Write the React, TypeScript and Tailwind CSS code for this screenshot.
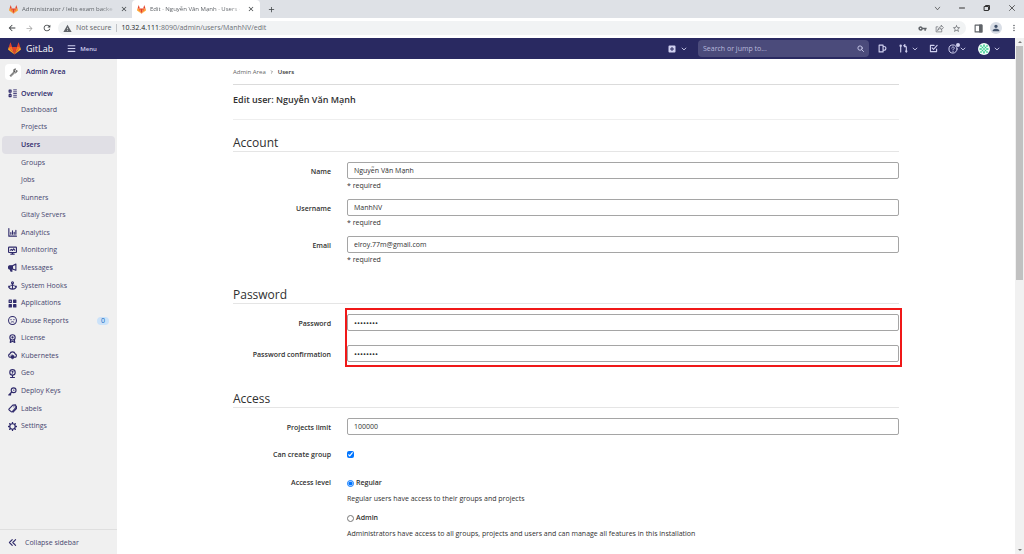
import type { ReactNode } from 'react'
import { MdArrowBack, MdArrowForward, MdRefresh, MdWarning, MdVpnKey, MdStarBorder, MdPerson, MdMoreVert, MdClose, MdAdd } from 'react-icons/md'

function Tanuki({ className }: { className: string }) {
  return (
    <svg viewBox="0 0 36 34" className={className} aria-hidden="true">
      <path fill="#e24329" d="M18 33.5 24.6 13H11.4z" />
      <path fill="#fc6d26" d="M18 33.5 11.4 13H2.2zM18 33.5 24.6 13h9.2z" />
      <path fill="#fca326" d="M2.2 13 .2 19.2a1.400 1.400 0 0 0 .5 1.500L18 33.500zM33.800 13l2 6.200a1.400 1.400 0 0 1-.5 1.500L18 33.500z" />
      <path fill="#e24329" d="M2.200 13h9.200L7.500.8c-.2-.6-1.100-.6-1.300 0zM33.800 13h-9.200L28.500.8c.2-.6 1.100-.6 1.300 0z" />
    </svg>
  )
}

function Icon({ children, className = 'size-[9px]' }: { children: ReactNode; className?: string }) {
  return (
    <svg viewBox="0 0 16 16" fill="none" stroke="currentColor" strokeWidth="2" strokeLinecap="round" strokeLinejoin="round" className={`shrink-0 ${className}`} aria-hidden="true">
      {children}
    </svg>
  )
}

const icons = {
  overview: <><rect x="2" y="2" width="3.500" height="3.500" /><rect x="2" y="10" width="3.500" height="3.500" /><path d="M10 1.500h5M10 5h5M10 8h5M10 11.200h5M10 14.500h5M3.700 8h.1" strokeWidth="1.500" /></>,
  analytics: <path d="M1.500 1v13.500h13.500M5 8v3M8 5v6M11 7.500V11M14 4v7" />,
  monitoring: <><rect x="1" y="2" width="14" height="9.500" rx="1" /><path d="M5 14.500h6M8 12v2M4 7.500 6 6l2 2 2-3 2 2.500" /></>,
  messages: <><path d="M14 2v11L8 10.500V5zM8 5H3a2 2 0 0 0-2 2v1.500a2 2 0 0 0 2 2h5M4 11l1 3.500h2l-.7-4" /><path d="M2 6h5v4H2z" fill="currentColor" /></>,
  hooks: <><circle cx="8" cy="3" r="1.700" /><path d="M8 5v9.500M5 7.500h6M1.500 9.500c0 3.200 2.700 5 6.500 5s6.500-1.800 6.500-5M1 10.500l.8-1.500 1.700 1M15 10.500 14.200 9l-1.700 1" /></>,
  applications: <><rect x="2" y="2" width="4" height="4" /><rect x="10" y="2" width="4" height="4" fill="currentColor" /><rect x="2" y="10" width="4" height="4" fill="currentColor" /><rect x="10" y="10" width="4" height="4" fill="currentColor" /></>,
  abuse: <><circle cx="8" cy="8" r="7" strokeWidth="1.800" /><path d="M5 6.500h.8M10.200 6.500h.8M5.500 11c1.300-1.300 3.700-1.300 5 0" strokeWidth="1.600" /></>,
  license: <><circle cx="8" cy="6" r="4.700" /><circle cx="8" cy="6" r="1" /><path d="M4.800 10 4 15l4-2 4 2-.8-5" /></>,
  kubernetes: <><path d="M4 11.500a3.300 3.300 0 0 1-.6-6.400 4.800 4.800 0 0 1 9.300 0 3.300 3.300 0 0 1-.7 6.400" /><path d="m8 7 3 1.700v3.400L8 14l-3-1.900V8.700z" fill="currentColor" strokeWidth="1" /></>,
  geo: <><circle cx="8" cy="6" r="4.800" /><path d="M8 11v3.500M4.500 15h7M7 4l2 1-1.500 2.500" /></>,
  keys: <><circle cx="10" cy="5.800" r="4.300" /><path d="M6.800 9 1.500 14.200h3V12M10.200 5.700h.2" strokeWidth="2.200" /></>,
  labels: <><path d="m2 8.500 6.500-6.500 5-.5.8 4.500-6.600 7.500a1.500 1.500 0 0 1-2.200 0L2 10.600a1.500 1.500 0 0 1 0-2.100z" /><path d="M9 14.500 15 8V4M10.500 5h.1" /></>,
  settings: <><circle cx="8" cy="8" r="4.800" /><path d="M8 1v1.500M8 13.500V15M1 8h1.500M13.500 8H15M3 3l1 1M12 12l1 1M13 3l-1 1M4 12l-1 1" strokeWidth="2.400" /></>,
}

const overviewLinks = ['Dashboard', 'Projects', 'Users', 'Groups', 'Jobs', 'Runners', 'Gitaly Servers']

const sections: { label: string; icon: ReactNode; count?: number }[] = [
  { label: 'Analytics', icon: icons.analytics },
  { label: 'Monitoring', icon: icons.monitoring },
  { label: 'Messages', icon: icons.messages },
  { label: 'System Hooks', icon: icons.hooks },
  { label: 'Applications', icon: icons.applications },
  { label: 'Abuse Reports', icon: icons.abuse, count: 0 },
  { label: 'License', icon: icons.license },
  { label: 'Kubernetes', icon: icons.kubernetes },
  { label: 'Geo', icon: icons.geo },
  { label: 'Deploy Keys', icon: icons.keys },
  { label: 'Labels', icon: icons.labels },
  { label: 'Settings', icon: icons.settings },
]

function Chevron() {
  return <Icon className="size-[6px]"><path d="m3 5.500 5 5 5-5" strokeWidth="2.500" /></Icon>
}

function BrowserChrome() {
  return (
    <div className="shrink-0 text-[#5f6368]">
      <div className="flex h-[18px] bg-[#dee1e6] pl-[5px]">
        <div className="flex w-[127px] items-center gap-1 px-1">
          <Tanuki className="size-[9px] shrink-0" />
          <span className="min-w-0 flex-1 text-[6px] whitespace-nowrap mask-r-from-85%">Administrator / Ielts exam backe</span>
          <button aria-label="Close tab"><MdClose className="size-2 text-[#3c4043]" /></button>
        </div>
        <div className="flex w-[128px] items-center gap-1 rounded-t bg-white px-[5px]">
          <Tanuki className="size-[9px] shrink-0" />
          <span className="min-w-0 flex-1 text-[6px] whitespace-nowrap mask-r-from-85%">Edit · Nguyễn Văn Mạnh · Users ·</span>
          <button aria-label="Close tab"><MdClose className="size-2 text-[#3c4043]" /></button>
        </div>
        <button className="px-[7px]" aria-label="New tab"><MdAdd className="size-[9px] text-[#3c4043]" /></button>
        <div className="ml-auto flex items-center gap-[17px] pr-2 pb-[2px] text-[#333]">
          <button aria-label="Search tabs"><Icon className="size-[7px]"><path d="m3 5 5 6 5-6" strokeWidth="1.500" /></Icon></button>
          <button aria-label="Minimize"><Icon className="size-2"><path d="M3 8h10" /></Icon></button>
          <button aria-label="Restore"><Icon className="size-2"><path d="M3 5h8v8H3zM5 4.500V3h8v8h-1.500" /></Icon></button>
          <button aria-label="Close window"><Icon className="size-2"><path d="m3 3 10 10M13 3 3 13" strokeWidth="1.500" /></Icon></button>
        </div>
      </div>
      <div className="flex h-5 items-center bg-white pr-[5px] pl-[7px]">
        <div className="flex w-[51px] items-center gap-2">
          <button aria-label="Back"><MdArrowBack className="size-[10px] text-[#3c4043]" /></button>
          <button aria-label="Forward"><MdArrowForward className="size-[9px] text-[#aaa]" /></button>
          <button aria-label="Reload"><MdRefresh className="size-[10px] text-[#3c4043]" /></button>
        </div>
        <div className="flex h-[14px] flex-1 items-center rounded-full bg-[#f1f3f4] px-[5px]">
          <MdWarning className="size-[9px]" />
          <span className="ml-1 border-r border-[#c0c3c7] pr-1 leading-2">Not secure</span>
          <span className="ml-[5px] text-[#6b6f74]"><span className="text-[#202124]">10.32.4.111</span>:8090/admin/users/ManhNV/edit</span>
          <div className="ml-auto flex items-center gap-2">
            <MdVpnKey className="size-[9px]" />
            <Icon><path d="M5 5H2v9h10v-3M5 11c.5-4 3-6 6-6V2l4 4.500-4 4V8c-2.500 0-4.500.8-6 3z" strokeWidth="1.200" /></Icon>
            <MdStarBorder className="size-[9px]" />
          </div>
        </div>
        <div className="ml-2 flex items-center gap-[7px]">
          <Icon><path d="M2 2h12v12H2z" /><path d="M10 2h4v12h-4z" fill="currentColor" /></Icon>
          <span className="rounded-full bg-[#d9dee6] p-px"><MdPerson className="size-[10px] text-[#41516a]" /></span>
          <button aria-label="Browser menu"><MdMoreVert className="size-[10px]" /></button>
        </div>
      </div>
    </div>
  )
}

function Navbar() {
  return (
    <header className="flex h-[21px] shrink-0 items-center bg-[#292961] pr-[15px] pl-2 text-[#d1d1f0]">
      <a href="#" className="flex items-center gap-[5px] text-[9px] text-white">
        <Tanuki className="size-[13px]" />
        GitLab
      </a>
      <button className="ml-[14px] flex items-center gap-1 text-[6px] font-semibold">
        <Icon><path d="M2 3h12M2 8h12M2 13h12" /></Icon>
        Menu
      </button>
      <button className="mr-[11px] ml-auto flex items-center gap-[5px]" aria-label="Create new">
        <svg viewBox="0 0 16 16" className="size-2" aria-hidden="true"><path fill="currentColor" fillRule="evenodd" d="M3 1h10a2 2 0 0 1 2 2v10a2 2 0 0 1-2 2H3a2 2 0 0 1-2-2V3a2 2 0 0 1 2-2zm4 3v3H4v2h3v3h2V9h3V7H9V4z" /></svg>
        <Chevron />
      </button>
      <div className="flex h-[17px] w-[171px] items-center rounded-sm bg-[#4b4b7b] px-[5px]">
        <input aria-label="Search or jump to" placeholder="Search or jump to..." className="min-w-0 flex-1 outline-none placeholder:text-[#b9b9dc]" />
        <Icon className="size-[7px]"><circle cx="7" cy="7" r="5" /><path d="m11 11 4 4" /></Icon>
      </div>
      <button className="ml-[9px]" aria-label="Issues"><Icon><path d="M2 2h7v12H2zM9 4.500c4-.5 5 1 5 3.500s-1.500 3.500-5 3.500" /></Icon></button>
      <button className="ml-[12px] flex items-center gap-1" aria-label="Merge requests">
        <Icon><path d="M3 5v9M13 14V6c0-2-1-3-4-3M10.500 1 8.500 3l2 2" /><circle cx="3" cy="3" r="1.200" /><circle cx="13" cy="13" r="1" /></Icon>
        <Chevron />
      </button>
      <button className="ml-[11px]" aria-label="To-do list"><Icon><path d="M9 2.500H2.500v11h11V9M5.500 7 8 9.500l6.500-7" /></Icon></button>
      <button className="relative ml-[10px] flex items-center gap-[2px]" aria-label="Help">
        <Icon className="size-[10px]"><circle cx="8" cy="8" r="6.500" strokeWidth="1.600" /><path d="M6 6.500C6 4 10 4 10 6.500 10 8 8 8 8 9.500M8 12h.1" strokeWidth="1.600" /></Icon>
        <span className="absolute top-[-1px] left-[8px] size-1 rounded-full bg-[#d1d1f0]" />
        <Chevron />
      </button>
      <button className="ml-[12px] flex items-center gap-1" aria-label="User menu">
        <svg viewBox="0 0 16 16" className="size-3" aria-hidden="true">
          <circle cx="8" cy="8" r="8" fill="#f0fff8" />
          <path fill="#2fc98c" d="M3 3h2v2H3zM7 2h2v3H7zM11 3h2v2h-2zM5 5h2v2H5zM9 5h2v2H9zM2 7h3v2H2zM11 7h3v2h-3zM7 7h2v2H7zM5 9h2v2H5zM9 9h2v2H9zM3 11h2v2H3zM7 11h2v3H7zM11 11h2v2h-2z" />
        </svg>
        <Chevron />
      </button>
    </header>
  )
}

function Sidebar() {
  return (
    <aside className="flex w-[117px] shrink-0 flex-col bg-[#f0f0f0] text-[#46466f]">
      <a href="#" className="mt-[5px] flex items-center gap-[5px] pl-[5px] font-semibold text-[#2f2a6b]">
        <span className="flex size-4 items-center justify-center rounded-sm bg-white text-[#303030]">
          <Icon><path d="M9 6.500 2.500 13c-.5 1.500.5 2 1.500 1.300L10 8.500c2.500.5 4.500-1.200 4.300-4L12 6 10 4l1.500-2.500C9 1.500 7.500 3.500 9 6.500z" strokeWidth="1.500" /></Icon>
        </span>
        Admin Area
      </a>
      <nav className="mt-[6px]">
        <a href="#" className="flex h-[15px] items-center gap-1 pl-2 font-semibold text-[#2f2a6b]">
          <Icon>{icons.overview}</Icon>
          Overview
        </a>
        <div className="grid h-[334px] auto-rows-fr px-[2px]">
          {overviewLinks.map((label) => (
            <a key={label} href="#" className={`flex items-center rounded-sm pl-[19px] ${label === 'Users' ? 'bg-[#e0dfe5] font-semibold text-[#2f2a6b]' : ''}`}>{label}</a>
          ))}
          {sections.map((s) => (
            <a key={s.label} href="#" className="flex items-center gap-1 pr-[6px] pl-[6px]">
              <span className="text-[#2f2a6b]"><Icon>{s.icon}</Icon></span>
              {s.label}
              {s.count !== undefined && <span className="ml-auto rounded-full bg-[#cbe2f9] px-1 leading-2 text-[#1068bf]">{s.count}</span>}
            </a>
          ))}
        </div>
      </nav>
      <button className="mt-auto flex h-[25px] items-center gap-2 border-t border-[#dfdfdf] pt-px pl-2">
        <span className="text-[#2f2a6b]"><Icon><path d="m7.500 3-5 5 5 5M13.500 3l-5 5 5 5" /></Icon></span>
        Collapse sidebar
      </button>
    </aside>
  )
}

const inputStyle = 'block h-[17px] w-full rounded-xs border border-[#a5a5a5] bg-white px-[6px] text-[#303030]'

function Field({ id, label, value, type = 'text', required = false }: { id: string; label: string; value: string; type?: string; required?: boolean }) {
  return (
    <div className="flex gap-4">
      <label htmlFor={id} className="w-[98px] pt-[5px] text-right font-semibold">{label}</label>
      <div className="flex-1">
        <input id={id} type={type} defaultValue={value} className={`${inputStyle} ${type === 'password' ? 'text-[8px]' : ''}`} />
        {required && <p className="mt-[2px]">* required</p>}
      </div>
    </div>
  )
}

function Legend({ children }: { children: ReactNode }) {
  return <h2 className="border-b border-[#e5e5e5] pt-[2px] text-[12px] leading-[16px]">{children}</h2>
}

export default function App() {
  return (
    <div className="flex h-screen flex-col overflow-hidden bg-white font-['Open_Sans','Noto_Sans',sans-serif] text-[7px] leading-[10px] text-[#303030]">
      <BrowserChrome />
      <div className="flex min-h-0 flex-1">
        <div className="flex min-w-0 flex-1 flex-col">
          <Navbar />
          <div className="flex min-h-0 flex-1">
            <Sidebar />
            <main className="min-w-0 flex-1">
              <div className="mx-auto max-w-[666px]">
                <nav className="flex items-center gap-1 border-b border-[#dbdbdb] pt-2 pb-[7px] text-[6px]">
                  <a href="#" className="text-[#666]">Admin Area</a>
                  <Icon className="size-[4px]"><path d="m5 3 5 5-5 5" /></Icon>
                  <a href="#" className="font-semibold">Users</a>
                </nav>
                <h1 className="border-b border-[#eee] pt-2 pb-3 text-[9px] leading-[14px] font-semibold">Edit user: Nguyễn Văn Mạnh</h1>
                <form>
                  <section className="mt-[13px]">
                    <Legend>Account</Legend>
                    <div className="mt-[10px] flex flex-col gap-2">
                      <Field id="name" label="Name" value="Nguyễn Văn Mạnh" required />
                      <Field id="username" label="Username" value="ManhNV" required />
                      <Field id="email" label="Email" value="elroy.77m@gmail.com" required />
                    </div>
                  </section>
                  <section className="mt-5">
                    <Legend>Password</Legend>
                    <div className="relative mt-[10px] flex flex-col gap-[14px]">
                      <Field id="password" label="Password" value="12345678" type="password" />
                      <Field id="confirmation" label="Password confirmation" value="12345678" type="password" />
                      <div className="pointer-events-none absolute -top-[6px] -right-[3px] -bottom-[5px] left-[112px] border-2 border-[#f01818]" />
                    </div>
                  </section>
                  <section className="mt-[27px]">
                    <Legend>Access</Legend>
                    <div className="mt-[10px] flex flex-col">
                      <Field id="limit" label="Projects limit" value="100000" />
                      <div className="mt-[15px] flex gap-4">
                        <label htmlFor="group" className="w-[98px] text-right font-semibold">Can create group</label>
                        <input id="group" type="checkbox" defaultChecked className="mt-px size-[7px] accent-[#0075ff]" />
                      </div>
                      <div className="mt-[18px] flex gap-4">
                        <span className="w-[98px] text-right font-semibold">Access level</span>
                        <div className="flex-1">
                          <label className="flex items-center gap-[2px] font-semibold">
                            <input type="radio" name="level" defaultChecked className="size-[7px] accent-[#0075ff]" />
                            Regular
                          </label>
                          <p className="mt-[6px]">Regular users have access to their groups and projects</p>
                          <label className="mt-[9px] flex items-center gap-[2px] font-semibold">
                            <input type="radio" name="level" className="size-[7px]" />
                            Admin
                          </label>
                          <p className="mt-[6px]">Administrators have access to all groups, projects and users and can manage all features in this installation</p>
                        </div>
                      </div>
                    </div>
                  </section>
                </form>
              </div>
            </main>
          </div>
        </div>
        <div className="flex w-[9px] shrink-0 flex-col items-center bg-[#f1f1f1] text-[#777]">
          <svg viewBox="0 0 8 8" className="size-2 shrink-0" aria-hidden="true"><path d="M2 5h4L4 3z" fill="currentColor" /></svg>
          <div className="h-[234px] w-[7px] bg-[#c1c1c1]" />
          <svg viewBox="0 0 8 8" className="mt-auto size-2 shrink-0" aria-hidden="true"><path d="M2 3h4L4 5z" fill="currentColor" /></svg>
        </div>
      </div>
    </div>
  )
}
